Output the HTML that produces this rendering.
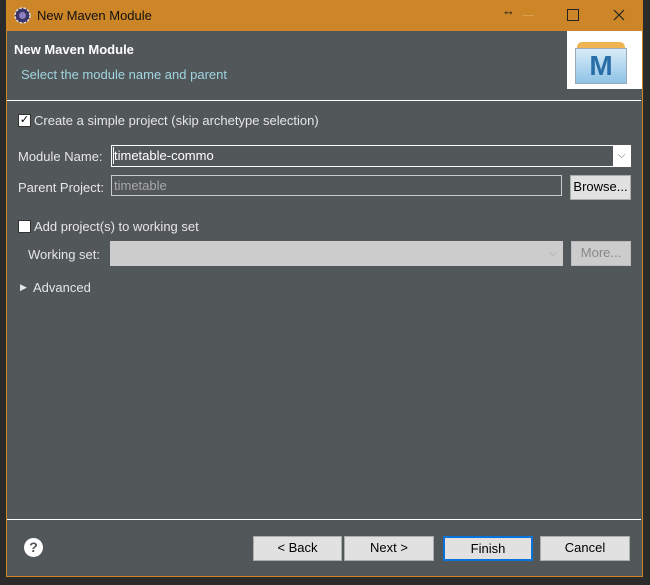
<!DOCTYPE html><html><head><style>
body{margin:0;width:650px;height:585px;background:#2b2b2b;font-family:"Liberation Sans","Microsoft YaHei",sans-serif;font-size:13px;position:relative;overflow:hidden}
.a{position:absolute}
.win{left:6px;top:0;width:635px;height:576px;background:#52575a;border:1px solid #cc8628;border-top:none}
.btn{position:absolute;background:#e1e1e1;border:1px solid #adadad;color:#000;text-align:center;line-height:22px;box-sizing:border-box;height:25px}
.t{color:#e6e6e6}
</style></head><body>
<div class="a win"></div>
<div class="a" style="left:6px;top:0;width:636px;height:31px;background:#cc8628"></div>
<svg class="a" style="left:14px;top:7px" width="17" height="17" viewBox="0 0 17 17"><circle cx="8.5" cy="8.5" r="7.5" fill="#3c3566" stroke="#ddd" stroke-width="1.5" stroke-dasharray="2.5 1.5"/><circle cx="8.5" cy="8.5" r="3.5" fill="#8c80c0"/></svg>
<div class="a" style="left:37px;top:8px;color:#111;font-size:13px">New Maven Module</div>
<div class="a" style="left:502px;top:3px;color:#222;font-size:13px;font-weight:bold">↔</div>
<div class="a" style="left:523px;top:15px;width:11px;height:1px;background:#d9a050"></div>
<div class="a" style="left:567px;top:9px;width:10px;height:10px;border:1px solid #222"></div>
<svg class="a" style="left:613px;top:9px" width="12" height="12"><path d="M1 1L11 11M11 1L1 11" stroke="#222" stroke-width="1.2"/></svg>
<div class="a" style="left:14px;top:42px;color:#fff;font-weight:bold;font-size:13px">New Maven Module</div>
<div class="a" style="left:21px;top:67px;color:#9fd4e0">Select the module name and parent</div>
<div class="a" style="left:567px;top:31px;width:75px;height:58px;background:#fff"></div>
<div class="a" style="left:577px;top:42px;width:48px;height:8px;background:#f1b452;border-radius:5px 5px 0 0"></div>
<div class="a" style="left:575px;top:48px;width:50px;height:34px;background:linear-gradient(#d8ecf8,#8ec3e6);border:1px solid #9ab;text-align:center;font:bold 28px 'Liberation Sans';color:#2a6ea8;line-height:34px">M</div>
<div class="a" style="left:7px;top:100px;width:634px;height:1px;background:#fff"></div>
<div class="a" style="left:18px;top:114px;width:11px;height:11px;background:#fff;border:1px solid #333;font-size:11px;line-height:11px;text-align:center;color:#000">✓</div>
<div class="a t" style="left:34px;top:113px">Create a simple project (skip archetype selection)</div>
<div class="a t" style="left:18px;top:149px">Module Name:</div>
<div class="a" style="left:111px;top:145px;width:518px;height:20px;border:1px solid #fff;background:#52575a"></div>
<div class="a" style="left:113px;top:147px;width:1px;height:17px;background:#fff"></div>
<div class="a t" style="left:114px;top:148px;color:#fff">timetable-commo</div>
<div class="a" style="left:613px;top:146px;width:17px;height:20px;background:#fff;color:#666;text-align:center;line-height:20px;font-size:10px">⌵</div>
<div class="a t" style="left:18px;top:180px">Parent Project:</div>
<div class="a" style="left:111px;top:175px;width:449px;height:19px;border:1px solid #ccc"></div>
<div class="a" style="left:114px;top:178px;color:#a8a8a8">timetable</div>
<div class="btn" style="left:570px;top:175px;width:61px">Browse...</div>
<div class="a" style="left:18px;top:220px;width:11px;height:11px;background:#fff;border:1px solid #333"></div>
<div class="a t" style="left:34px;top:219px">Add project(s) to working set</div>
<div class="a t" style="left:28px;top:247px">Working set:</div>
<div class="a" style="left:110px;top:241px;width:453px;height:25px;background:#cccccc;color:#999;text-align:right;line-height:25px;font-size:10px"><span style="margin-right:6px">⌵</span></div>
<div class="btn" style="left:571px;top:241px;width:60px;height:25px;background:#ccc;border-color:#bbb;color:#888">More...</div>
<div class="a t" style="left:20px;top:282px;font-size:9px">▶</div>
<div class="a t" style="left:33px;top:280px">Advanced</div>
<div class="a" style="left:7px;top:519px;width:634px;height:1px;background:#fff"></div>
<div class="a" style="left:24px;top:538px;width:19px;height:19px;border-radius:50%;background:#fff;color:#52575a;font-weight:bold;text-align:center;line-height:19px;font-size:14px">?</div>
<div class="btn" style="left:253px;top:536px;width:89px">&lt; Back</div>
<div class="btn" style="left:344px;top:536px;width:90px">Next &gt;</div>
<div class="btn" style="left:443px;top:536px;width:90px;border:2px solid #0b72d8;line-height:21px">Finish</div>
<div class="btn" style="left:540px;top:536px;width:90px">Cancel</div>
</body></html>
